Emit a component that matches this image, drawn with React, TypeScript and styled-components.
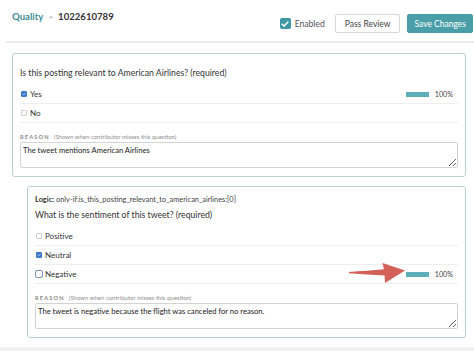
import React from 'react'
import styled, { createGlobalStyle } from 'styled-components'

const GlobalStyle = createGlobalStyle`
  html, body {
    margin: 0;
    padding: 0;
    background: #ffffff;
  }
  body {
    font-family: Lato, 'Open Sans', sans-serif;
    color: #333333;
  }
`

interface Option {
  label: string
  checked?: boolean
  focused?: boolean
  percent?: number
  arrow?: boolean
}

interface Question {
  logic?: string
  text: string
  options: Option[]
  reason: string
  indent?: boolean
}

const questions: Question[] = [
  {
    text: 'Is this posting relevant to American Airlines? (required)',
    options: [{ label: 'Yes', checked: true, percent: 100 }, { label: 'No' }],
    reason: 'The tweet mentions American Airlines',
  },
  {
    logic: 'only-if:is_this_posting_relevant_to_american_airlines:[0]',
    text: 'What is the sentiment of this tweet? (required)',
    options: [
      { label: 'Positive' },
      { label: 'Neutral', checked: true },
      { label: 'Negative', focused: true, percent: 100, arrow: true },
    ],
    reason: 'The tweet is negative because the flight was canceled for no reason.',
    indent: true,
  },
]

const CheckMark: React.FC<{ size: number }> = ({ size }) => (
  <svg width={size} height={size} viewBox='0 0 10 10'>
    <path
      d='M2.2 5.2 L4.2 7.1 L7.9 3'
      fill='none'
      stroke='#ffffff'
      strokeWidth='1.5'
      strokeLinecap='round'
      strokeLinejoin='round'
    />
  </svg>
)

const Arrow: React.FC = () => (
  <StyledArrow width='57' height='22' viewBox='0 0 57 22'>
    <path
      d='M0 10 C12 9 24 8.2 35 7.2 L33.5 1 L56 8.6 L36 21 L35.6 13.6 C24 13 12 12 0 11.2 Z'
      fill='#d4605a'
    />
  </StyledArrow>
)

const App: React.FC = () => {
  return (
    <StyledPage>
      <GlobalStyle />
      <StyledHeader>
        <StyledCrumbs>
          <StyledCrumbLink>Quality</StyledCrumbLink>
          <StyledCrumbSep>&gt;</StyledCrumbSep>
          <StyledCrumbId>1022610789</StyledCrumbId>
        </StyledCrumbs>
        <StyledActions>
          <StyledToggle>
            <StyledToggleBox>
              <CheckMark size={10} />
            </StyledToggleBox>
            Enabled
          </StyledToggle>
          <StyledButton>Pass Review</StyledButton>
          <StyledButton primary>Save Changes</StyledButton>
        </StyledActions>
      </StyledHeader>

      {questions.map((q) => (
        <StyledCard key={q.text} indent={q.indent}>
          {q.logic && (
            <StyledLogic>
              <b>Logic:</b> {q.logic}
            </StyledLogic>
          )}
          <StyledQuestion>{q.text}</StyledQuestion>
          {q.options.map((o) => (
            <StyledOption key={o.label}>
              <StyledBox checked={o.checked} focused={o.focused}>
                {o.checked && <CheckMark size={6} />}
              </StyledBox>
              <StyledOptionLabel>{o.label}</StyledOptionLabel>
              {o.percent !== undefined && (
                <StyledStat>
                  {o.arrow && <Arrow />}
                  <StyledBar />
                  <StyledPercent>{o.percent}%</StyledPercent>
                </StyledStat>
              )}
            </StyledOption>
          ))}
          <StyledReasonLabel>
            REASON
            <StyledReasonHint>
              (Shown when contributor misses this question)
            </StyledReasonHint>
          </StyledReasonLabel>
          <StyledTextArea readOnly defaultValue={q.reason} />
        </StyledCard>
      ))}
      <StyledFooterLine />
    </StyledPage>
  )
}

const StyledPage = styled.div`
  width: 474px;
  height: 351px;
  padding-left: 6px;
  box-sizing: border-box;
  overflow: hidden;
  display: flex;
  flex-direction: column;
`

const StyledHeader = styled.div`
  height: 43px;
  flex-shrink: 0;
  display: flex;
  align-items: flex-start;
  justify-content: space-between;
  padding: 0 1px 0 6px;
  box-sizing: border-box;
  border-bottom: 2px solid #ebebeb;
`

const StyledCrumbs = styled.div`
  display: flex;
  align-items: center;
  font-size: 9.6px;
  font-weight: 700;
  padding-top: 11px;
`

const StyledCrumbLink = styled.span`
  color: #3f8e98;
`

const StyledCrumbSep = styled.span`
  color: #999999;
  font-weight: 400;
  margin: 0 5px 0 5px;
  font-size: 8px;
`

const StyledCrumbId = styled.span`
  color: #333333;
`

const StyledActions = styled.div`
  display: flex;
  align-items: center;
  margin-top: 14px;
`

const StyledToggle = styled.label`
  display: flex;
  align-items: center;
  gap: 4px;
  font-size: 8.6px;
  color: #555555;
  margin-right: 10px;
`

const StyledToggleBox = styled.span`
  width: 11px;
  height: 11px;
  border-radius: 2px;
  background: #3f97a3;
  display: flex;
  align-items: center;
  justify-content: center;
`

const StyledButton = styled.button<{ primary?: boolean }>`
  height: 19px;
  padding: 0 ${(props) => (props.primary ? '6px' : '9px')};
  margin-left: ${(props) => (props.primary ? '7px' : '0')};
  font-family: Lato, sans-serif;
  font-size: 8.5px;
  border-radius: 2px;
  border: 1px solid ${(props) => (props.primary ? '#4a9ea8' : '#d6d6d6')};
  background: ${(props) => (props.primary ? '#4a9ea8' : '#ffffff')};
  color: ${(props) => (props.primary ? '#ffffff' : '#444444')};
`

const StyledCard = styled.div<{ indent?: boolean }>`
  margin: ${(props) => (props.indent ? '9px 8px 0 21px' : '10px 8px 0 6px')};
  border: 1px solid #b7d1d4;
  border-radius: 3px;
  padding: ${(props) => (props.indent ? '8px 7px 8px 7px' : '13px 7px 8px 7px')};
  display: flex;
  flex-direction: column;
`

const StyledLogic = styled.div`
  font-size: 7.4px;
  color: #444444;
  margin-bottom: 5px;
  b {
    color: #333333;
  }
`

const StyledQuestion = styled.div`
  font-size: 8.7px;
  color: #333333;
  margin-bottom: 7px;
`

const StyledOption = styled.div`
  height: 18px;
  display: flex;
  align-items: center;
  border-bottom: 1px solid #eeeeee;
`

const StyledBox = styled.span<{ checked?: boolean; focused?: boolean }>`
  width: ${(props) => (props.focused ? '8px' : '6px')};
  height: ${(props) => (props.focused ? '8px' : '6px')};
  box-sizing: border-box;
  border-radius: ${(props) => (props.focused ? '2px' : '1px')};
  border: 1px solid
    ${(props) =>
      props.checked ? '#3d79c8' : props.focused ? '#7d97b5' : '#cfcfcf'};
  background: ${(props) => (props.checked ? '#3d79c8' : '#ffffff')};
  display: flex;
  align-items: center;
  justify-content: center;
  margin-right: ${(props) => (props.focused ? '2px' : '3px')};
  margin-left: ${(props) => (props.focused ? '0' : '1px')};
`

const StyledOptionLabel = styled.span`
  font-size: 8px;
  color: #333333;
`

const StyledStat = styled.div`
  margin-left: auto;
  display: flex;
  align-items: center;
  position: relative;
  margin-right: 5px;
`

const StyledArrow = styled.svg`
  position: absolute;
  left: -57px;
  top: -8px;
`

const StyledBar = styled.span`
  width: 23px;
  height: 5px;
  background: #5eaeb9;
  margin-right: 6px;
`

const StyledPercent = styled.span`
  font-size: 7.2px;
  color: #444444;
`

const StyledReasonLabel = styled.div`
  margin-top: 10px;
  font-size: 5.6px;
  font-weight: 700;
  letter-spacing: 1.2px;
  color: #8a8a8a;
  display: flex;
  align-items: baseline;
`

const StyledReasonHint = styled.span`
  font-weight: 400;
  letter-spacing: 0;
  margin-left: 4px;
  font-size: 6px;
  color: #8f8f8f;
`

const StyledTextArea = styled.textarea`
  margin-top: 2px;
  height: 26px;
  box-sizing: border-box;
  resize: vertical;
  border: 1px solid #d3d3d3;
  border-radius: 2px;
  padding: 2px 2px;
  font-family: Lato, sans-serif;
  font-size: 7.6px;
  color: #222222;
  outline: none;
`

const StyledFooterLine = styled.div`
  margin-top: auto;
  height: 4px;
  background: #f1f1f1;
  margin-left: -6px;
`

export default App
